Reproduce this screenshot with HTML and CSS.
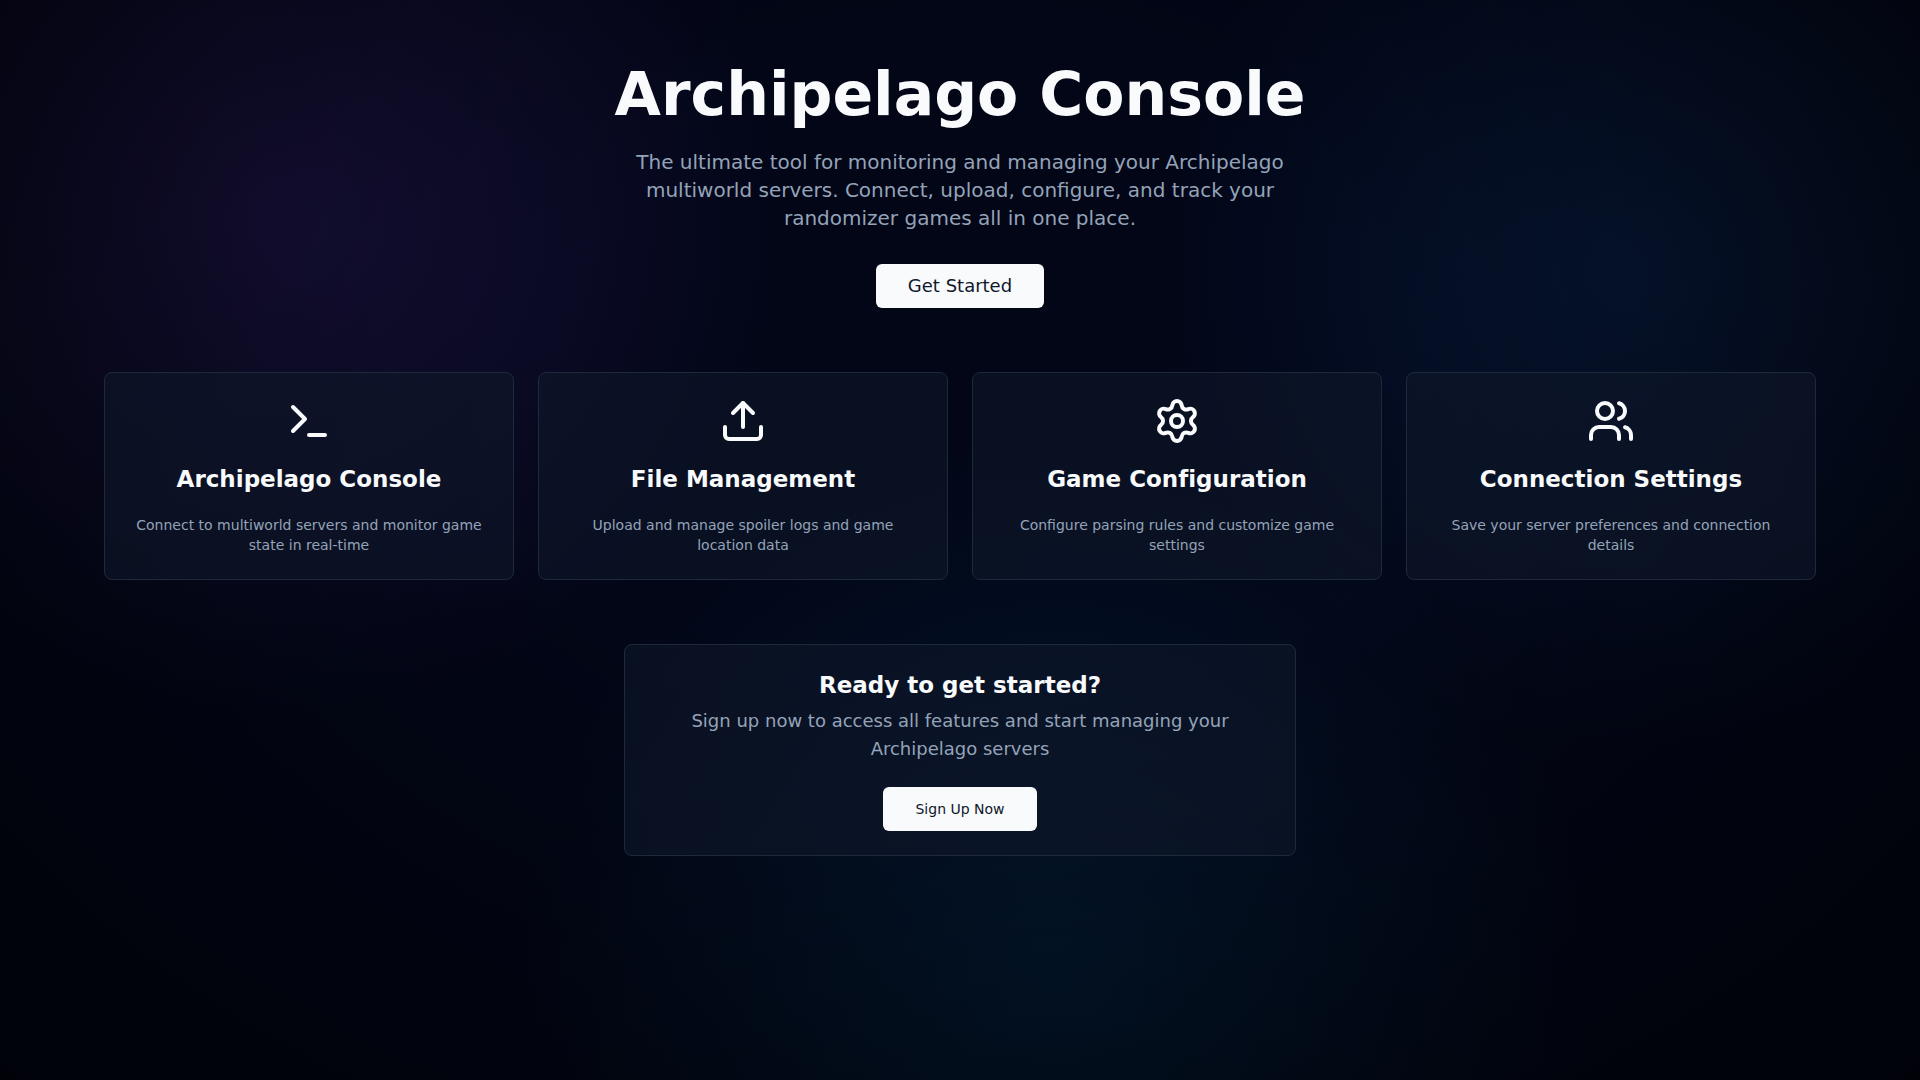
FILE: index.html
```html
<!DOCTYPE html>
<html lang="en">
<head>
  <meta charset="utf-8">
  <meta name="viewport" content="width=device-width, initial-scale=1">
  <title>Archipelago Console</title>
  <link rel="stylesheet" href="styles.css">
</head>
<body>
  <main class="page">
    <header class="hero">
      <h1 class="hero-title">Archipelago Console</h1>
      <p class="hero-text">The ultimate tool for monitoring and managing your Archipelago multiworld servers. Connect, upload, configure, and track your randomizer games all in one place.</p>
      <button class="button button-large" type="button">Get Started</button>
    </header>

    <section class="features">
      <article class="card">
        <svg class="card-icon" viewBox="0 0 24 24" aria-hidden="true"><path d="m4 17 6-6-6-6"/><path d="M12 19h8"/></svg>
        <h2 class="card-title">Archipelago Console</h2>
        <p class="card-text">Connect to multiworld servers and monitor game state in real-time</p>
      </article>
      <article class="card">
        <svg class="card-icon" viewBox="0 0 24 24" aria-hidden="true"><path d="M21 15v4a2 2 0 0 1-2 2H5a2 2 0 0 1-2-2v-4"/><path d="m17 8-5-5-5 5"/><path d="M12 3v12"/></svg>
        <h2 class="card-title">File Management</h2>
        <p class="card-text">Upload and manage spoiler logs and game location data</p>
      </article>
      <article class="card">
        <svg class="card-icon" viewBox="0 0 24 24" aria-hidden="true"><path d="M9.671 4.136a2.34 2.34 0 0 1 4.659 0 2.34 2.34 0 0 0 3.319 1.915 2.34 2.34 0 0 1 2.33 4.033 2.34 2.34 0 0 0 0 3.831 2.34 2.34 0 0 1-2.33 4.033 2.34 2.34 0 0 0-3.319 1.915 2.34 2.34 0 0 1-4.659 0 2.34 2.34 0 0 0-3.32-1.915 2.34 2.34 0 0 1-2.33-4.033 2.34 2.34 0 0 0 0-3.831A2.34 2.34 0 0 1 6.35 6.051a2.34 2.34 0 0 0 3.319-1.915"/><circle cx="12" cy="12" r="3"/></svg>
        <h2 class="card-title">Game Configuration</h2>
        <p class="card-text">Configure parsing rules and customize game settings</p>
      </article>
      <article class="card">
        <svg class="card-icon" viewBox="0 0 24 24" aria-hidden="true"><path d="M16 21v-2a4 4 0 0 0-4-4H6a4 4 0 0 0-4 4v2"/><circle cx="9" cy="7" r="4"/><path d="M22 21v-2a4 4 0 0 0-3-3.87"/><path d="M16 3.13a4 4 0 0 1 0 7.75"/></svg>
        <h2 class="card-title">Connection Settings</h2>
        <p class="card-text">Save your server preferences and connection details</p>
      </article>
    </section>

    <section class="card signup">
      <h2 class="card-title signup-title">Ready to get started?</h2>
      <p class="signup-text">Sign up now to access all features and start managing your Archipelago servers</p>
      <button class="button" type="button">Sign Up Now</button>
    </section>
  </main>
</body>
</html>
```
FILE: styles.css
```css
*,
*::before,
*::after {
  box-sizing: border-box;
}

body {
  margin: 0;
  min-height: 100vh;
  background:
    radial-gradient(ellipse at 50% 35%, transparent 30%, rgb(0 0 0 / 60%) 100%),
    radial-gradient(circle at 15% 20%, rgb(139 72 246 / 14%), transparent 500px),
    radial-gradient(circle at 85% 25%, rgb(37 129 235 / 12%), transparent 480px),
    radial-gradient(circle at 55% 90%, rgb(14 165 233 / 11%), transparent 540px),
    #020617;
  color: #f8fafc;
  font-family: "DejaVu Sans", sans-serif;
  text-align: center;
}

h1,
h2,
p {
  margin: 0;
}

.page {
  display: flex;
  flex-direction: column;
  align-items: center;
  gap: 64px;
  max-width: 1776px;
  margin: 0 auto;
  padding: 64px 32px;
}

.hero {
  display: flex;
  flex-direction: column;
  align-items: center;
}

.hero-title {
  font-size: 60px;
  line-height: 60px;
}

.hero-text {
  max-width: 672px;
  margin: 24px 0 32px;
  color: #94a3b8;
  font-size: 20px;
  line-height: 28px;
}

.button {
  height: 44px;
  padding: 0 32px;
  border: 0;
  border-radius: 6px;
  background: #f8fafc;
  color: #0f172a;
  font-family: inherit;
  font-size: 14px;
  font-weight: 500;
  line-height: 20px;
  cursor: pointer;
}

.button-large {
  font-size: 18px;
  line-height: 28px;
}

.features {
  display: grid;
  grid-template-columns: repeat(auto-fit, minmax(300px, 1fr));
  gap: 24px;
  width: 100%;
}

.card {
  display: flex;
  flex-direction: column;
  align-items: center;
  padding: 24px;
  border: 1px solid #1e293b;
  border-radius: 8px;
  background: rgb(15 23 42 / 60%);
}

.card-icon {
  width: 48px;
  height: 48px;
  margin-bottom: 22px;
  fill: none;
  stroke: currentColor;
  stroke-width: 2;
  stroke-linecap: round;
  stroke-linejoin: round;
}

.card-title {
  font-size: 23px;
  line-height: 24px;
  font-variant-ligatures: none;
}

.card-text {
  margin-top: 24px;
  color: #94a3b8;
  font-size: 14px;
  line-height: 20px;
}

.signup {
  width: 100%;
  max-width: 672px;
}

.signup-title {
  line-height: 32px;
}

.signup-text {
  margin: 6px 0 24px;
  color: #94a3b8;
  font-size: 18px;
  line-height: 28px;
}
```
